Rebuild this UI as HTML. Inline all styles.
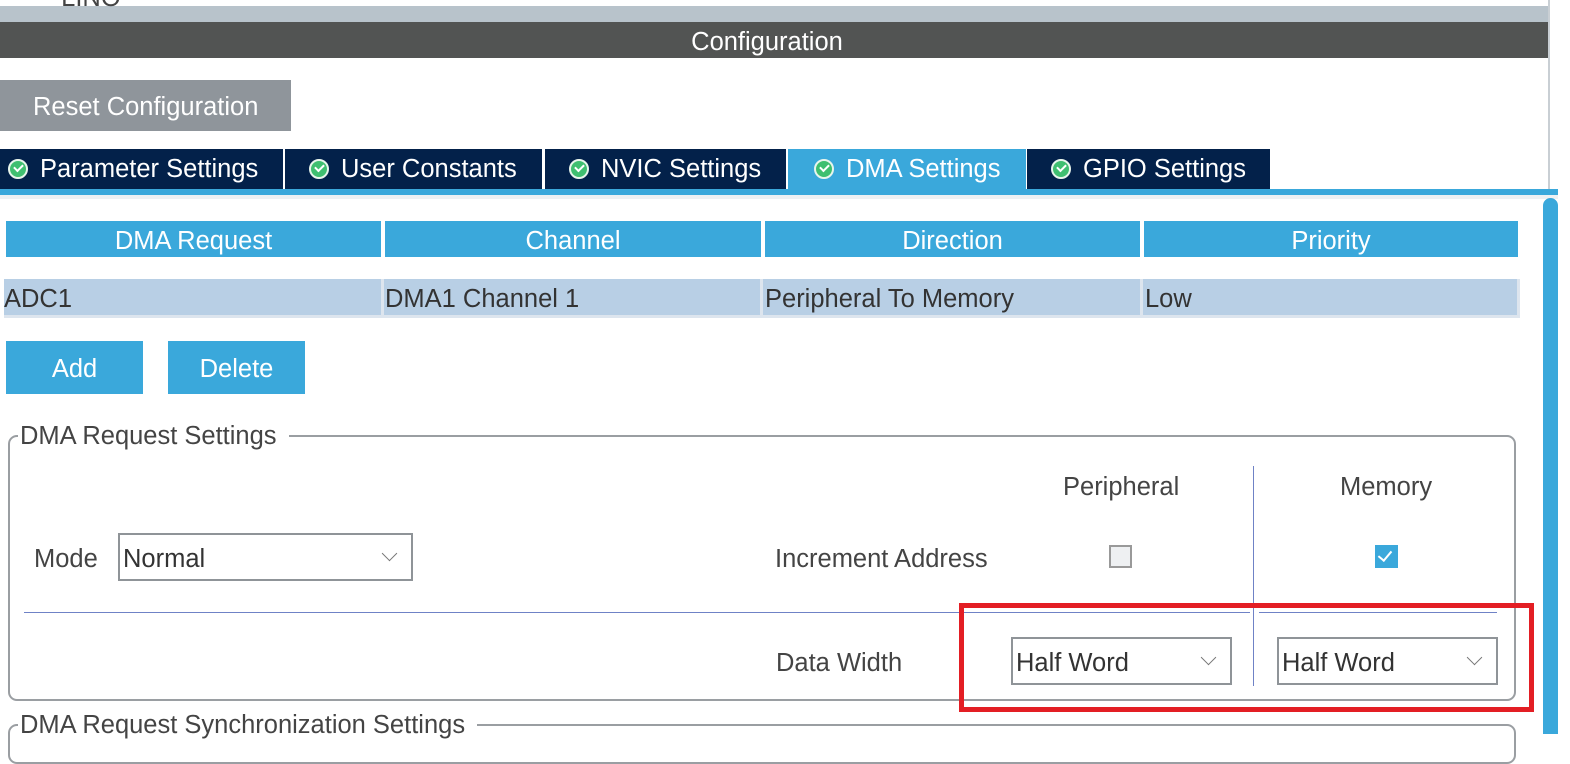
<!DOCTYPE html>
<html><head><meta charset="utf-8"><style>
*{margin:0;padding:0;box-sizing:border-box}
body{width:1570px;height:734px;overflow:hidden;background:#fff;font-family:"Liberation Sans",Arial,sans-serif;position:relative;color:#333}
.a{position:absolute}
.t{font-size:25.5px;line-height:1}
.tab{position:absolute;top:149px;height:40px;background:#03214a;color:#fff;font-size:25.5px;line-height:41px;padding-left:8px;white-space:nowrap}
.tab i{display:inline-block;width:20px;height:20px;border-radius:50%;background:#3fbf70;border:2px solid #e8f5ec;vertical-align:-2px;margin-right:12px;position:relative}
.tab i:after{content:"";position:absolute;left:4px;top:3px;width:7px;height:4px;border-left:2px solid #fff;border-bottom:2px solid #fff;transform:rotate(-45deg)}
.th{position:absolute;top:221px;height:36px;background:#3aa8db;color:#fff;font-size:25.5px;line-height:40px;text-align:center}
.td{position:absolute;top:279px;height:39px;background:#b8cfe5;color:#333;font-size:25.5px;line-height:41px;border-right:3px solid #dde5ee;border-bottom:3px solid #dde5ee;white-space:nowrap}
.btn{position:absolute;top:341px;height:53px;background:#3aa8db;color:#fff;font-size:25.5px;line-height:57px;text-align:center}
.sel{position:absolute;height:48px;border:2px solid #8f9498;background:#fff;font-size:25.5px;line-height:48px;padding-left:3px;color:#333}
.sel:after{content:"";position:absolute;right:16px;top:13px;width:10px;height:10px;border-right:1.5px solid #777;border-bottom:1.5px solid #777;transform:rotate(45deg)}
</style></head><body>
<div class="a" style="left:0;top:6px;width:1548px;height:16px;background:#b8c3cb"></div>
<div class="a t" style="left:36px;top:-14px;color:#444">└ LINO</div>
<div class="a" style="left:0;top:22px;width:1548px;height:36px;background:#525453;color:#fff;font-size:25.5px;line-height:40px;text-align:center;padding-right:14px">Configuration</div>
<div class="a" style="left:1548px;top:0;width:2px;height:200px;background:#c9cfd4"></div>
<div class="a" style="left:0;top:80px;width:291px;height:51px;background:#8f959b;color:#fff;font-size:25.5px;line-height:54px;padding-left:33px">Reset Configuration</div>

<div class="tab" style="left:0;width:283px"><i></i>Parameter Settings</div>
<div class="tab" style="left:285px;width:257px;padding-left:24px"><i></i>User Constants</div>
<div class="tab" style="left:545px;width:241px;padding-left:24px"><i></i>NVIC Settings</div>
<div class="tab" style="left:788px;width:238px;padding-left:26px;background:#3aa8db"><i></i>DMA Settings</div>
<div class="tab" style="left:1027px;width:243px;padding-left:24px"><i></i>GPIO Settings</div>
<div class="a" style="left:0;top:189px;width:1558px;height:6px;background:#3aa8db"></div>
<div class="a" style="left:0;top:195px;width:1558px;height:4px;background:#eef1f3"></div>
<div class="a" style="left:1543px;top:198px;width:15px;height:536px;background:#3aa8db;border-radius:8px 8px 0 0"></div>

<div class="th" style="left:6px;width:375px">DMA Request</div>
<div class="th" style="left:385px;width:376px">Channel</div>
<div class="th" style="left:765px;width:375px">Direction</div>
<div class="th" style="left:1144px;width:374px">Priority</div>
<div class="td" style="left:4px;width:380px">ADC1</div>
<div class="td" style="left:384px;width:379px;padding-left:1px">DMA1 Channel 1</div>
<div class="td" style="left:763px;width:380px;padding-left:2px">Peripheral To Memory</div>
<div class="td" style="left:1143px;width:377px;padding-left:2px">Low</div>

<div class="btn" style="left:6px;width:137px">Add</div>
<div class="btn" style="left:168px;width:137px">Delete</div>

<div class="a" style="left:8px;top:435px;width:1508px;height:266px;border:2px solid #9a9ea2;border-radius:9px"></div>
<div class="a t" style="left:18px;top:424px;background:#fff;padding:0 12px 0 2px;color:#444">DMA Request Settings</div>
<div class="a" style="left:8px;top:724px;width:1508px;height:40px;border:2px solid #9a9ea2;border-radius:9px"></div>
<div class="a t" style="left:18px;top:713px;background:#fff;padding:0 12px 0 2px;color:#444">DMA Request Synchronization Settings</div>

<div class="a t" style="left:1063px;top:475px;color:#444">Peripheral</div>
<div class="a t" style="left:1340px;top:475px;color:#444">Memory</div>
<div class="a" style="left:1253px;top:466px;width:1px;height:220px;background:#6f82c6"></div>
<div class="a t" style="left:34px;top:547px;color:#444">Mode</div>
<div class="sel" style="left:118px;top:533px;width:295px">Normal</div>
<div class="a t" style="left:775px;top:547px;color:#444">Increment Address</div>
<div class="a" style="left:1109px;top:545px;width:23px;height:23px;border:2px solid #999;background:#eef0f2"></div>
<div class="a" style="left:1375px;top:545px;width:23px;height:23px;background:#3aa8db"></div>
<div class="a" style="left:1381px;top:548px;width:8px;height:13px;border-right:2.5px solid #fff;border-bottom:2.5px solid #fff;transform:rotate(40deg)"></div>
<div class="a" style="left:24px;top:612px;width:1226px;height:1px;background:#6f82c6"></div>
<div class="a" style="left:1259px;top:612px;width:238px;height:1px;background:#6f82c6"></div>
<div class="a t" style="left:776px;top:651px;color:#444">Data Width</div>
<div class="sel" style="left:1011px;top:637px;width:221px">Half Word</div>
<div class="sel" style="left:1277px;top:637px;width:221px">Half Word</div>
<div class="a" style="left:959px;top:603px;width:575px;height:109px;border:5px solid #e31e24"></div>
</body></html>
